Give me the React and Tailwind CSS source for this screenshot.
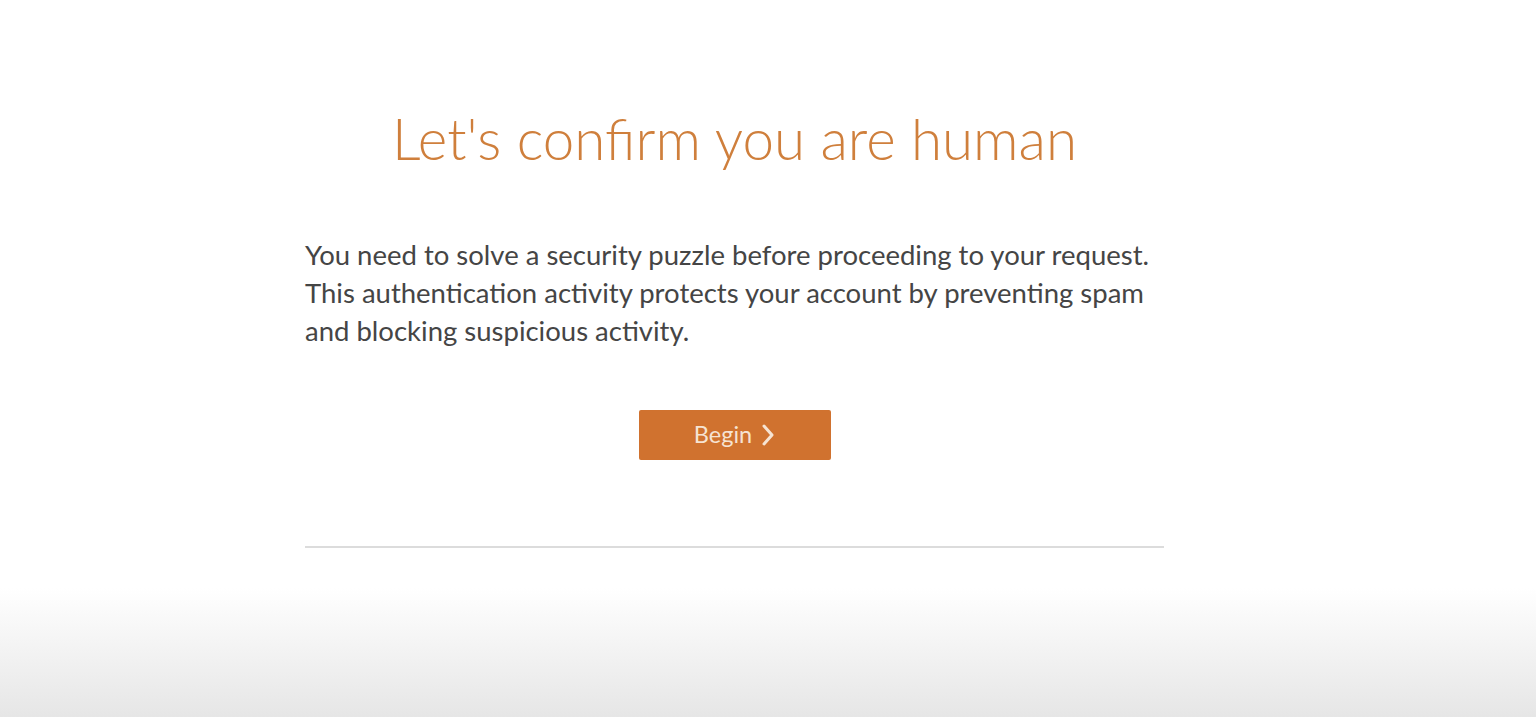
export default function App() {
  return (
    <div className="w-[1536px] h-[717px] overflow-hidden bg-gradient-to-b from-white from-[82%] to-[#e6e6e6] flex flex-col" style={{ fontFamily: 'Lato, "Noto Sans", sans-serif' }}>
      <div className="ml-[305px] w-[859px] flex flex-col">
        <h1 className="mt-[103px] text-center text-[56.5px] leading-[70px] font-light text-[#cf7f3c]">Let's confirm you are human</h1>
        <p className="mt-[63px] text-[27.5px] leading-[38px] text-[#454545]">
          You need to solve a security puzzle before proceeding to your request. This authentication activity protects your account by preventing spam and blocking suspicious activity.
        </p>
        <div className="mt-[60px] flex justify-center">
          <button className="w-[192px] h-[50px] bg-[#d0722f] rounded-[2px] flex items-center justify-center gap-[9px] text-[23.5px] text-[#f6e3d2]">
            <span>Begin</span>
            <svg width="14" height="24" viewBox="0 0 14 24" fill="none" stroke="#f6e3d2" strokeWidth="3" strokeLinecap="round" strokeLinejoin="round"><path d="M3 3l8 9-8 9" /></svg>
          </button>
        </div>
        <div className="mt-[86px] h-[2px] bg-[#dcdcdc]" />
      </div>
    </div>
  );
}
